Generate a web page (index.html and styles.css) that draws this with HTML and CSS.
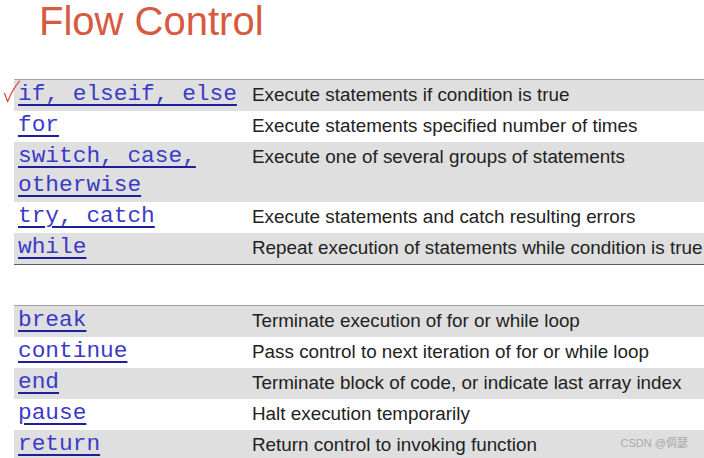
FILE: index.html
```html
<!DOCTYPE html>
<html lang="en">
<head>
<meta charset="utf-8">
<title>Flow Control</title>
<link rel="stylesheet" href="styles.css">
</head>
<body>
<div class="page">
  <h1 class="title">Flow Control</h1>

  <div class="ftable first">
    <div class="row shade">
      <div class="kw"><a href="#">if, elseif, else</a></div>
      <div class="desc">Execute statements if condition is true</div>
    </div>
    <div class="row">
      <div class="kw"><a href="#">for</a></div>
      <div class="desc">Execute statements specified number of times</div>
    </div>
    <div class="row shade">
      <div class="kw"><a href="#">switch, case,</a><br><a href="#">otherwise</a></div>
      <div class="desc">Execute one of several groups of statements</div>
    </div>
    <div class="row">
      <div class="kw"><a href="#">try, catch</a></div>
      <div class="desc">Execute statements and catch resulting errors</div>
    </div>
    <div class="row shade">
      <div class="kw"><a href="#">while</a></div>
      <div class="desc">Repeat execution of statements while condition is true</div>
    </div>
  </div>

  <div class="ftable second">
    <div class="row shade">
      <div class="kw"><a href="#">break</a></div>
      <div class="desc">Terminate execution of for or while loop</div>
    </div>
    <div class="row">
      <div class="kw"><a href="#">continue</a></div>
      <div class="desc">Pass control to next iteration of for or while loop</div>
    </div>
    <div class="row shade">
      <div class="kw"><a href="#">end</a></div>
      <div class="desc">Terminate block of code, or indicate last array index</div>
    </div>
    <div class="row">
      <div class="kw"><a href="#">pause</a></div>
      <div class="desc">Halt execution temporarily</div>
    </div>
    <div class="row shade">
      <div class="kw"><a href="#">return</a></div>
      <div class="desc">Return control to invoking function</div>
    </div>
  </div>

  <svg class="check" width="18" height="26" viewBox="0 0 18 26" aria-hidden="true">
    <path d="M1.5 13.5 C2.6 16 3.6 18.6 4.6 21.6 C7.5 14.5 11.5 7 16.5 1.2" fill="none" stroke="#d84a4a" stroke-width="1.3" stroke-linecap="round" stroke-linejoin="round"/>
  </svg>
  <div class="watermark">CSDN @倜瑟</div>
</div>
</body>
</html>
```

FILE: styles.css
```css
html, body {
  margin: 0;
  padding: 0;
  background: #ffffff;
}

.page {
  position: relative;
  width: 704px;
  height: 458px;
  overflow: hidden;
  font-family: "Liberation Sans", Arial, sans-serif;
}

.title {
  margin: 0;
  padding-left: 39px;
  height: 79px;
  font-family: "Liberation Sans", Arial, sans-serif;
  font-weight: normal;
  font-size: 40px;
  line-height: 42px;
  color: #d65a3f;
}

.ftable {
  margin-left: 14px;
  width: 690px;
  display: flex;
  flex-direction: column;
}

.ftable.first {
  border-top: 1px solid #a3a3a3;
  border-bottom: 1.5px solid #5c5c5c;
}

.ftable.second {
  margin-top: 40px;
  border-top: 1px solid #a0a0a0;
}

.row {
  display: grid;
  grid-template-columns: 238px 1fr;
  padding-bottom: 2px;
  background: #ffffff;
}

.row.shade {
  background: #dfdfdf;
}

.kw {
  padding-left: 4px;
  font-family: "Liberation Mono", "Courier New", monospace;
  font-size: 22.8px;
  line-height: 29px;
  white-space: nowrap;
}

.kw a {
  color: #3a3ac8;
  text-decoration: underline;
  text-decoration-color: #1f1f9c;
  text-decoration-thickness: 1.5px;
  text-underline-offset: 4px;
}

.desc {
  font-size: 18.85px;
  line-height: 29px;
  color: #222222;
  white-space: nowrap;
}

.check {
  position: absolute;
  left: 3px;
  top: 80px;
}

.watermark {
  position: absolute;
  right: 16px;
  top: 436px;
  font-family: "Liberation Sans", "Noto Sans CJK SC", sans-serif;
  font-size: 11px;
  line-height: 14px;
  color: #a9a9a9;
}
```
